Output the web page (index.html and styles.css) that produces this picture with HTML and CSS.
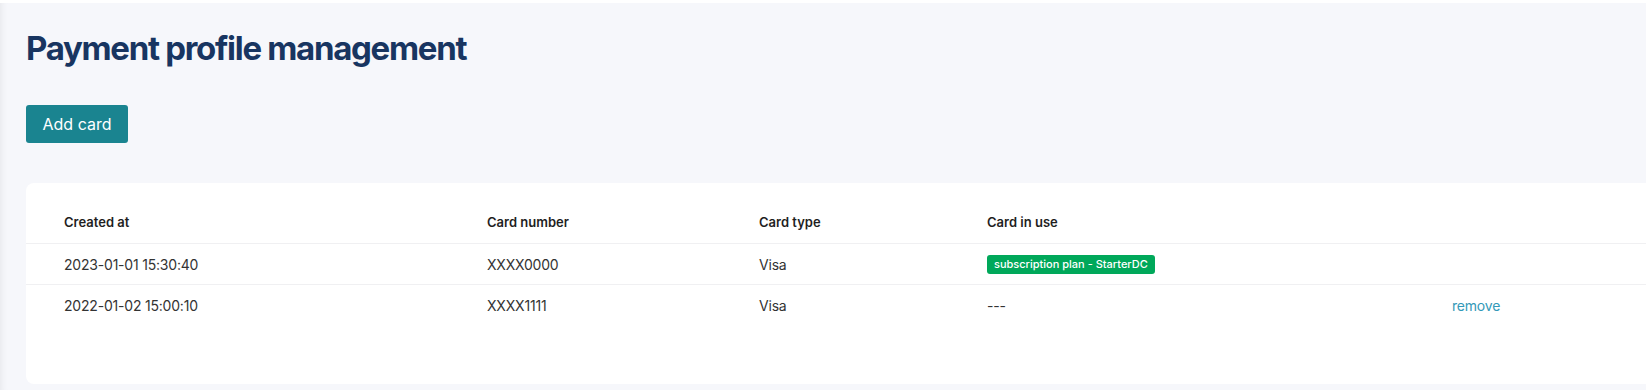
FILE: index.html
```html
<!DOCTYPE html>
<html lang="en">
<head>
    <meta charset="UTF-8">
    <meta name="viewport" content="width=device-width, initial-scale=1.0">
    <title>Payment profile management</title>
    <link rel="stylesheet" href="styles.css">
</head>
<body>
    <div class="main">
        <h1 class="title">Payment profile management</h1>
        <button class="btn">Add card</button>

        <!-- 卡片列表 -->
        <div class="card">
            <div class="row head">
                <div>Created at</div>
                <div>Card number</div>
                <div>Card type</div>
                <div>Card in use</div>
                <div></div>
            </div>
            <div class="row">
                <div>2023-01-01 15:30:40</div>
                <div>XXXX0000</div>
                <div>Visa</div>
                <div><span class="tag">subscription plan - StarterDC</span></div>
                <div></div>
            </div>
            <div class="row last">
                <div>2022-01-02 15:00:10</div>
                <div>XXXX1111</div>
                <div>Visa</div>
                <div>---</div>
                <div><a class="remove" href="#">remove</a></div>
            </div>
        </div>
    </div>
</body>
</html>
```

FILE: styles.css
```css
*{
    margin: 0;
    padding: 0;
    box-sizing: border-box;
}
body{
    background: #fff;
    font-family: Inter, "Noto Sans", sans-serif;
    color: #2b2b2b;
}
.main{
    margin-top: 3px;
    height: 387px;
    background: #f6f7fb;
    padding-left: 26px;
    padding-top: 25px;
    box-shadow: inset 7px 0 6px -5px rgba(0, 0, 0, .06);
    overflow: hidden;
}
.title{
    font-size: 33px;
    line-height: 41px;
    font-weight: 700;
    letter-spacing: -1.3px;
    color: #183561;
}
.btn{
    margin-top: 36px;
    width: 102px;
    height: 38px;
    border: none;
    border-radius: 3px;
    background: #1a8490;
    color: #fff;
    font-family: Inter, sans-serif;
    font-size: 16px;
    font-weight: 400;
    display: block;
}
.card{
    margin-top: 40px;
    background: #fff;
    border-radius: 8px 0 0 8px;
    padding: 18px 0 59px;
}
.row{
    display: grid;
    grid-template-columns: 423px 272px 228px 465px 1fr;
    align-items: center;
    height: 41px;
    padding-left: 38px;
    border-bottom: 1px solid #f0f0f2;
    font-size: 14px;
    letter-spacing: -0.2px;
    color: #333;
}
.row.head{
    height: 43px;
    font-size: 13px;
    font-weight: 600;
    letter-spacing: 0;
    color: #1f1f1f;
}
.row.last{
    border-bottom: none;
    height: 40px;
}
.tag{
    display: inline-block;
    height: 19px;
    line-height: 19px;
    padding: 0 7px;
    border-radius: 3px;
    background: #00a85a;
    color: #fff;
    font-size: 11px;
    font-weight: 500;
    letter-spacing: 0;
}
.remove{
    color: #3399b8;
    text-decoration: none;
}
```
